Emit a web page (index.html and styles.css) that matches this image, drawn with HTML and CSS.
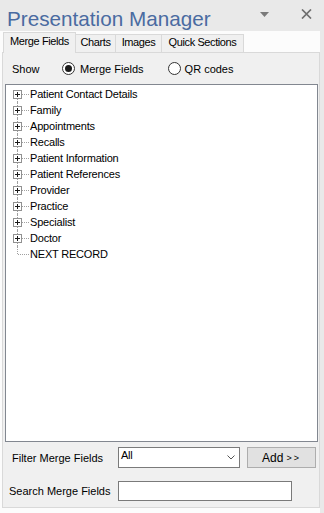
FILE: index.html
```html
<!DOCTYPE html>
<html>
<head>
<meta charset="utf-8">
<link rel="stylesheet" href="styles.css">
</head>
<body>
<div class="window">
  <header class="titlebar">
    <h1 class="title">Presentation Manager</h1>
    <svg class="dd" width="9" height="5" viewBox="0 0 9 5"><path d="M0 0H9L4.5 5Z" fill="#7a7a7a"/></svg>
    <svg class="close" width="11" height="10" viewBox="0 0 11 10"><path d="M1 0.5L10 9.5M10 0.5L1 9.5" stroke="#6e6e6e" stroke-width="1.7" fill="none"/></svg>
  </header>
  <div class="dock">
    <div class="tabs">
      <div class="tab active">Merge Fields</div>
      <div class="tab t-charts">Charts</div>
      <div class="tab t-images">Images</div>
      <div class="tab t-quick">Quick Sections</div>
    </div>
    <div class="panel">
      <div class="show-row">
        <span class="show-label">Show</span>
        <label class="radio"><span class="circle checked"></span>Merge Fields</label>
        <label class="radio radio-qr"><span class="circle"></span>QR codes</label>
      </div>
      <ul class="tree">
        <li class="node first"><span class="exp"></span><span class="txt">Patient Contact Details</span></li>
        <li class="node"><span class="exp"></span><span class="txt">Family</span></li>
        <li class="node"><span class="exp"></span><span class="txt">Appointments</span></li>
        <li class="node"><span class="exp"></span><span class="txt">Recalls</span></li>
        <li class="node"><span class="exp"></span><span class="txt">Patient Information</span></li>
        <li class="node"><span class="exp"></span><span class="txt">Patient References</span></li>
        <li class="node"><span class="exp"></span><span class="txt">Provider</span></li>
        <li class="node"><span class="exp"></span><span class="txt">Practice</span></li>
        <li class="node"><span class="exp"></span><span class="txt">Specialist</span></li>
        <li class="node"><span class="exp"></span><span class="txt">Doctor</span></li>
        <li class="node last"><span class="txt">NEXT RECORD</span></li>
      </ul>
      <div class="filter-row">
        <span class="filter-label">Filter Merge Fields</span>
        <div class="select">
          <span class="select-val">All</span>
          <svg class="chev" width="8" height="5" viewBox="0 0 8 5"><path d="M0.5 0.5L4 4L7.5 0.5" stroke="#555" stroke-width="1" fill="none"/></svg>
        </div>
        <div class="btn">Add <span class="gt">&gt;&gt;</span></div>
      </div>
      <div class="search-row">
        <span class="search-label">Search Merge Fields</span>
        <div class="search-input"></div>
      </div>
    </div>
  </div>
</div>
</body>
</html>
```
FILE: styles.css
```css
* { box-sizing: border-box; }
html, body { margin: 0; padding: 0; }
body {
  background: #e9e9e9;
  font-family: "Liberation Sans", Arial, sans-serif;
  font-size: 11px;
  color: #000;
  width: 324px;
  height: 513px;
  overflow: hidden;
}
.window { display: flex; flex-direction: column; height: 513px; }
.titlebar {
  height: 31px;
  display: flex;
  align-items: flex-start;
  flex: none;
}
.title {
  margin: 0;
  padding: 6px 0 0 7px;
  font-size: 20.7px;
  line-height: 26px;
  font-weight: normal;
  color: #4a6ba1;
}
.dd { margin: 12px 0 0 auto; }
.close { margin: 9px 12px 0 32px; }

.dock {
  flex: 1;
  width: 320px;
  background: #fcfcfc;
  padding: 0 0 5px 2px;
  display: flex;
  flex-direction: column;
}
.tabs {
  display: flex;
  align-items: flex-end;
  height: 22px;
  margin: 0 0 -1px 1px;
  flex: none;
}
.tab {
  height: 18px;
  margin-bottom: 1px;
  margin-left: -1px;
  border: 1px solid #d9d9d9;
  border-bottom: none;
  background: #f0f0f0;
  text-align: center;
  line-height: 15px;
  letter-spacing: -0.4px;
  white-space: nowrap;
}
.tab.active {
  margin-left: 0;
  width: 73px;
  height: 21px;
  margin-bottom: 0;
  line-height: 17px;
  background: #f0f0f0;
  position: relative;
  z-index: 1;
}
.t-charts { width: 41px; }
.t-images { width: 47px; }
.t-quick { width: 83px; }

.panel {
  flex: 1;
  width: 318px;
  border: 1px solid #d9d9d9;
  background: #f0f0f0;
}
.show-row {
  height: 31px;
  display: flex;
  align-items: center;
  padding-left: 9px;
}
.show-label { width: 50px; }
.radio { display: flex; align-items: center; }
.circle {
  width: 13px;
  height: 13px;
  border: 1px solid #333;
  border-radius: 50%;
  background: #fff;
  margin-right: 5px;
  display: flex;
  align-items: center;
  justify-content: center;
}
.circle.checked::before {
  content: "";
  width: 7px;
  height: 7px;
  border-radius: 50%;
  background: #1a1a1a;
}
.radio-qr { margin-left: 24px; }
.radio-qr .circle { margin-right: 4px; }

.tree {
  list-style: none;
  margin: 0 0 0 2px;
  padding: 1px 0 0 0;
  width: 313px;
  height: 358px;
  border: 1px solid #828790;
  background: #fff;
}
.node {
  position: relative;
  height: 16px;
  line-height: 16px;
  padding-left: 24px;
  letter-spacing: -0.2px;
  white-space: nowrap;
}
.node::before {
  content: "";
  position: absolute;
  left: 11px;
  top: 0;
  bottom: 0;
  border-left: 1px dotted #a0a0a0;
}
.node.first::before { top: 8px; }
.node.last::before { bottom: 8px; }
.node::after {
  content: "";
  position: absolute;
  left: 12px;
  top: 8px;
  width: 11px;
  border-top: 1px dotted #a0a0a0;
}
.exp {
  position: absolute;
  left: 7px;
  top: 4px;
  width: 9px;
  height: 9px;
  border: 1px solid #919191;
  background: #fff;
  z-index: 1;
}
.exp::before {
  content: "";
  position: absolute;
  left: 1px;
  top: 3px;
  width: 5px;
  height: 1px;
  background: #1a1a1a;
}
.exp::after {
  content: "";
  position: absolute;
  left: 3px;
  top: 1px;
  width: 1px;
  height: 5px;
  background: #1a1a1a;
}

.filter-row {
  display: flex;
  align-items: center;
  margin-top: 5px;
  height: 21px;
  padding-left: 9px;
}
.filter-label { width: 106px; }
.select {
  width: 122px;
  height: 21px;
  border: 1px solid #7a7a7a;
  background: #fff;
  display: flex;
  align-items: flex-start;
  padding-left: 2px;
  line-height: 15px;
}
.select-val { letter-spacing: -0.3px; }
.chev { margin: 7px 0 0 auto; margin-right: 4px; }
.btn {
  margin-left: 7px;
  width: 69px;
  height: 21px;
  border: 1px solid #adadad;
  background: #e1e1e1;
  display: flex;
  align-items: center;
  justify-content: center;
  font-size: 12px;
}
.gt { font-size: 9px; letter-spacing: 2px; margin-left: 3px; }

.search-row {
  display: flex;
  align-items: center;
  margin-top: 13px;
  height: 20px;
  padding-left: 6px;
}
.search-label { width: 109px; }
.search-input {
  width: 174px;
  height: 20px;
  border: 1px solid #7a7a7a;
  background: #fff;
}
```
